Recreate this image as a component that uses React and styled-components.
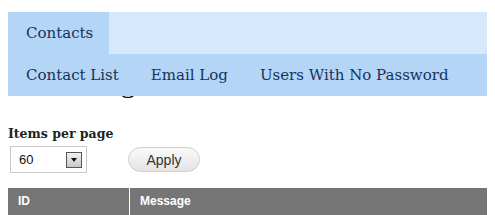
import React from 'react';
import styled, { createGlobalStyle } from 'styled-components';

const GlobalStyle = createGlobalStyle`
  body {
    margin: 8px;
    background: #fff;
    font-family: "Liberation Serif", serif;
    overflow: hidden;
  }
`;

const Page = styled.div`
  position: relative;
  padding-top: 4px;
`;

const Nav = styled.div`
  position: absolute;
  top: 4px;
  left: 0;
  right: -8px;
  z-index: 2;
`;

const TabRow = styled.div`
  display: flex;
  height: 42px;
  background: ${p => p.$sub ? '#b4d5f6' : '#d6e9fc'};
`;

const Tab = styled.a`
  display: flex;
  align-items: center;
  padding: 0 16px 0 ${p => p.$first ? 18 : 16}px;
  font-family: "DejaVu Serif", Georgia, serif;
  font-size: 15px;
  color: #16325a;
  background: ${p => p.$active ? '#b4d5f6' : 'transparent'};
  text-decoration: none;
  white-space: nowrap;
`;

const Heading = styled.h1`
  margin: 53px 0 0;
  font-family: "Liberation Serif", serif;
  font-weight: normal;
  font-size: 30px;
  line-height: 34px;
  color: #111;
`;

const Form = styled.div`
  margin-top: 27px;
`;

const Label = styled.div`
  font-family: "DejaVu Serif", serif;
  font-weight: bold;
  font-size: 12.5px;
  color: #222;
  line-height: 16px;
`;

const Controls = styled.div`
  display: flex;
  align-items: center;
  gap: 41px;
  margin: 4px 0 0 2px;
`;

const Select = styled.div`
  height: 25px;
  border: 1px solid #c8c8c8;
  display: flex;
  align-items: center;
  justify-content: space-between;
  padding: 0 4px 0 8px;
  box-sizing: content-box;
  width: 63px;
  font-family: "Liberation Sans", Arial, sans-serif;
  font-size: 13px;
  color: #111;
`;

const Arrow = styled.span`
  width: 14px;
  height: 14px;
  border: 1px solid #555;
  background: linear-gradient(#f2f2f2, #c8c8c8);
  display: flex;
  align-items: center;
  justify-content: center;
  &::after {
    content: '';
    border-left: 3.5px solid transparent;
    border-right: 3.5px solid transparent;
    border-top: 4px solid #111;
    margin-top: 1px;
  }
`;

const Button = styled.button`
  width: 72px;
  height: 25px;
  border: 1px solid #cfcfcf;
  border-radius: 13px;
  background: linear-gradient(#fafafa, #e4e4e4);
  font-family: "Liberation Sans", Arial, sans-serif;
  font-size: 14px;
  color: #333;
  padding: 0;
`;

const Table = styled.div`
  display: grid;
  grid-template-columns: 121px 1fr;
  gap: 1px;
  margin: 15px -8px 0 0;
  background: #fff;
`;

const Th = styled.div`
  background: #767676;
  height: 30px;
  padding: 6px 10px 0;
  box-sizing: border-box;
  font-family: "Liberation Sans", Arial, sans-serif;
  font-weight: bold;
  font-size: 12px;
  color: #fff;
`;

export default function App() {
  return (
    <Page>
      <GlobalStyle />
      <Nav>
        <TabRow>
          <Tab $active $first>Contacts</Tab>
        </TabRow>
        <TabRow $sub>
          <Tab $first>Contact List</Tab>
          <Tab>Email Log</Tab>
          <Tab>Users With No Password</Tab>
        </TabRow>
      </Nav>
      <Heading>Email Log</Heading>
      <Form>
        <Label>Items per page</Label>
        <Controls>
          <Select>60<Arrow /></Select>
          <Button>Apply</Button>
        </Controls>
      </Form>
      <Table>
        <Th>ID</Th>
        <Th>Message</Th>
      </Table>
    </Page>
  );
}
